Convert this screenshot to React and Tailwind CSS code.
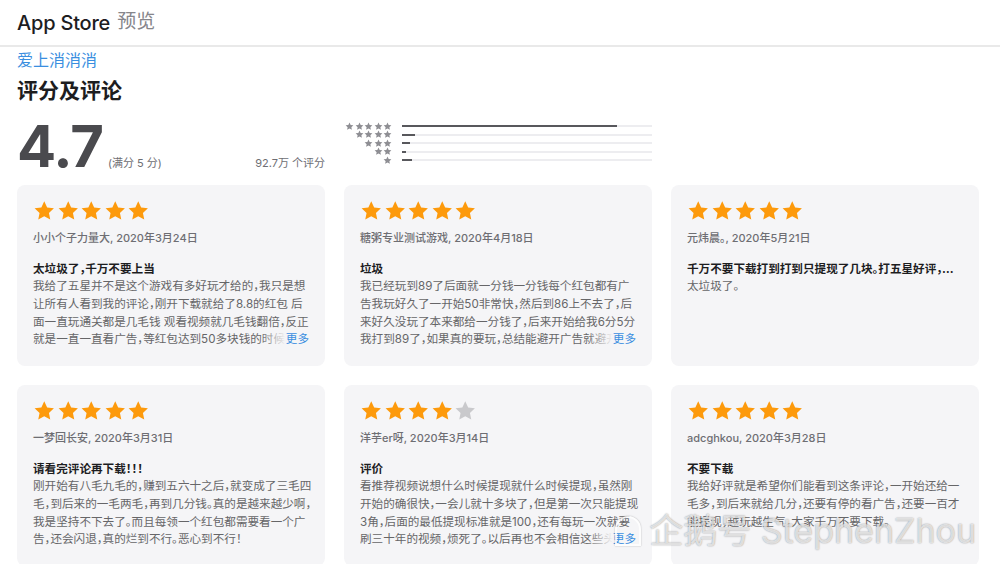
import React from 'react';

const STAR_PATH =
  'M12 1.4l3.1 6.6 7.2.85-5.3 4.95 1.4 7.1L12 17.3l-6.4 3.6 1.4-7.1-5.3-4.95 7.2-.85L12 1.4z';

const Star = ({ size, color }) => (
  <svg width={size} height={size} viewBox="0 0 24 24" className="block shrink-0">
    <path d={STAR_PATH} fill={color} />
  </svg>
);

const histogram = [
  { stars: 5, pct: 86 },
  { stars: 4, pct: 5 },
  { stars: 3, pct: 3 },
  { stars: 2, pct: 1.5 },
  { stars: 1, pct: 4 },
];

const reviews = [
  {
    id: 1,
    rating: 5,
    author: '小小个子力量大, 2020年3月24日',
    title: '太垃圾了，千万不要上当',
    lines: [
      '我给了五星并不是这个游戏有多好玩才给的，我只是想',
      '让所有人看到我的评论，刚开下载就给了8.8的红包 后',
      '面一直玩通关都是几毛钱 观看视频就几毛钱翻倍，反正',
      '就是一直一直看广告，等红包达到50多块钱的时候给',
    ],
    more: true,
  },
  {
    id: 2,
    rating: 5,
    author: '糖粥专业测试游戏, 2020年4月18日',
    title: '垃圾',
    lines: [
      '我已经玩到89了后面就一分钱一分钱每个红包都有广',
      '告我玩好久了一开始50非常快，然后到86上不去了，后',
      '来好久没玩了本来都给一分钱了，后来开始给我6分5分',
      '我打到89了，如果真的要玩，总结能避开广告就避开',
    ],
    more: true,
  },
  {
    id: 3,
    rating: 5,
    author: '元炜晨。, 2020年5月21日',
    title: '千万不要下载打到打到只提现了几块。打五星好评，只是想让更多人看到',
    lines: ['太垃圾了。'],
    more: false,
  },
  {
    id: 4,
    rating: 5,
    author: '一梦回长安, 2020年3月31日',
    title: '请看完评论再下载！！！',
    lines: [
      '刚开始有八毛九毛的，赚到五六十之后，就变成了三毛四',
      '毛，到后来的一毛两毛，再到几分钱。真的是越来越少啊，',
      '我是坚持不下去了。而且每领一个红包都需要看一个广',
      '告，还会闪退，真的烂到不行。恶心到不行！',
    ],
    more: false,
  },
  {
    id: 5,
    rating: 4,
    author: '洋芋er呀, 2020年3月14日',
    title: '评价',
    lines: [
      '看推荐视频说想什么时候提现就什么时候提现，虽然刚',
      '开始的确很快，一会儿就十多块了，但是第一次只能提现',
      '3角，后面的最低提现标准就是100，还有每玩一次就要',
      '刷三十年的视频，烦死了。以后再也不会相信这些头条',
    ],
    more: true,
  },
  {
    id: 6,
    rating: 5,
    author: 'adcghkou, 2020年3月28日',
    title: '不要下载',
    lines: [
      '我给好评就是希望你们能看到这条评论，一开始还给一',
      '毛多，到后来就给几分，还要有停的看广告，还要一百才',
      '能提现，越玩越生气，大家千万不要下载。',
    ],
    more: false,
  },
];

const ReviewCard = ({ review }) => {
  const last = review.lines.length - 1;
  return (
    <div className="h-[181px] rounded-lg bg-[#f5f5f7] px-4 pt-[15px] [font-feature-settings:'halt']">
      <div className="flex gap-px">
        {[1, 2, 3, 4, 5].map((n) => (
          <Star key={n} size={22.5} color={n <= review.rating ? '#fd9a0c' : '#c9c9cc'} />
        ))}
      </div>
      <p className="mt-2 text-[11px] leading-[14px] font-medium text-[#6e6e73]">{review.author}</p>
      <h3 className="mt-4 truncate text-[11.6px] leading-[17.7px] font-bold text-[#1d1d1f]">
        {review.title}
      </h3>
      <div className="text-[11.6px] leading-[17.7px] text-[#666668]">
        {review.lines.map((line, i) =>
          review.more && i === last ? (
            <div key={i} className="flex">
              <span className="min-w-0 flex-1 overflow-hidden whitespace-nowrap">{line}</span>
              <span className="relative shrink-0 text-[#3a8ee0]">
                <span className="absolute top-0 right-full h-full w-[26px] bg-linear-to-r from-[#f5f5f7]/0 to-[#f5f5f7]" />
                更多
              </span>
            </div>
          ) : (
            <div key={i} className="whitespace-nowrap">
              {line}
            </div>
          )
        )}
      </div>
    </div>
  );
}

export default function App() {
  return (
    <div className="relative h-[564px] w-[1000px] overflow-hidden bg-white font-[Inter,'Noto_Sans_CJK_SC',sans-serif]">
      <header className="flex h-[47px] items-center border-b-2 border-[#e9e9e9] px-[17px]">
        <span className="text-[20px] font-medium tracking-[-0.2px] text-[#1d1d1f]">App Store</span>
        <span className="ml-[7px] text-[19px] text-[#86868b]">预览</span>
      </header>

      <main className="px-[17px]">
        <a className="mt-[3px] block text-[16px] leading-[20px] text-[#3a8ee0]">爱上消消消</a>
        <h2 className="mt-[7px] text-[21px] leading-[28px] font-semibold text-[#1d1d1f]">评分及评论</h2>

        {/* rating summary + histogram */}
        <div className="mt-[12px] flex h-[58px]">
          <div className="flex w-[308px] items-baseline">
            <span className="text-[58px] leading-none font-bold tracking-[-1px] text-[#4a4a4e]">4.7</span>
            <span className="ml-[5px] text-[11px] text-[#6e6e73]">(满分 5 分)</span>
            <span className="ml-auto text-[11px] text-[#6e6e73]">92.7万 个评分</span>
          </div>
          <div className="ml-[20px] flex w-[307px] flex-col pt-[5px]">
            {histogram.map((row) => (
              <div key={row.stars} className="flex h-[8.5px] items-center">
                <div className="flex w-[47px] justify-end gap-[0.5px]">
                  {Array.from({ length: row.stars }).map((_, i) => (
                    <Star key={i} size={9} color="#8e8e93" />
                  ))}
                </div>
                <div className="ml-[10px] h-[2px] w-[250px] bg-[#ededf0]">
                  <div className="h-full bg-[#58585c]" style={{ width: `${row.pct}%` }} />
                </div>
              </div>
            ))}
          </div>
        </div>

        <div className="mt-[10px] grid grid-cols-[repeat(3,308px)] gap-x-[19px] gap-y-[19px]">
          {reviews.map((r) => (
            <ReviewCard key={r.id} review={r} />
          ))}
        </div>
      </main>

      {/* account watermark */}
      <div className="pointer-events-none absolute right-[24px] bottom-[16px] flex items-center gap-2 text-[34px] leading-none text-white/70 [text-shadow:0_0_1.5px_rgba(0,0,0,0.45)]">
        <span className="block h-[30px] w-[26px] rounded-t-full border-2 border-white/80 shadow-[0_0_1.5px_rgba(0,0,0,0.35)]" />
        <span>企鹅号 StephenZhou</span>
      </div>
    </div>
  );
}
